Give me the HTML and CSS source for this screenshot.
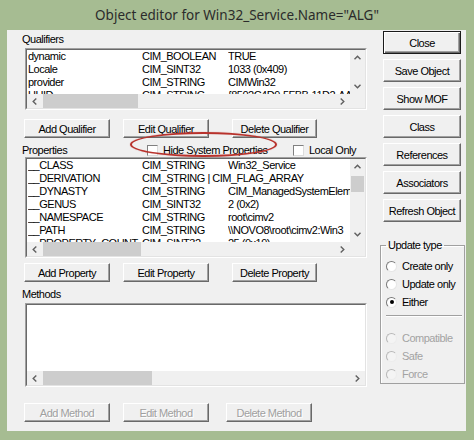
FILE: index.html
```html
<!DOCTYPE html>
<html>
<head>
<meta charset="utf-8">
<link rel="stylesheet" href="styles.css">
</head>
<body>
<div class="window">
  <div class="titlebar">Object editor for Win32_Service.Name="ALG"</div>
  <div class="client">
    <div class="left">
      <div class="label label-q">Qualifiers</div>
      <div class="list list-q">
        <div class="list-in">
          <div class="rows">
            <div class="row"><span class="c1">dynamic</span><span class="c2">CIM_BOOLEAN</span><span class="c3">TRUE</span></div>
            <div class="row"><span class="c1">Locale</span><span class="c2">CIM_SINT32</span><span class="c3">1033 (0x409)</span></div>
            <div class="row"><span class="c1">provider</span><span class="c2">CIM_STRING</span><span class="c3">CIMWin32</span></div>
            <div class="row"><span class="c1">UUID</span><span class="c2">CIM_STRING</span><span class="c3">{8502C4D9-5FBB-11D2-AA</span></div>
          </div>
          <div class="vscroll">
            <div class="arrow"><svg width="7" height="5" viewBox="0 0 7 5"><polyline points="0.5,4.3 3.5,1.2 6.5,4.3" fill="none" stroke="#606060" stroke-width="1.4"/></svg></div>
            <div class="vtrack"></div>
            <div class="arrow"><svg width="7" height="5" viewBox="0 0 7 5"><polyline points="0.5,0.7 3.5,3.8 6.5,0.7" fill="none" stroke="#606060" stroke-width="1.4"/></svg></div>
          </div>
          <div class="hscroll">
            <div class="arrow"><svg width="5" height="7" viewBox="0 0 5 7"><polyline points="4.3,0.5 1.2,3.5 4.3,6.5" fill="none" stroke="#606060" stroke-width="1.4"/></svg></div>
            <div class="htrack"><div class="hthumb thumb-q"></div></div>
            <div class="arrow"><svg width="5" height="7" viewBox="0 0 5 7"><polyline points="0.7,0.5 3.8,3.5 0.7,6.5" fill="none" stroke="#606060" stroke-width="1.4"/></svg></div>
          </div>
          <div class="corner"></div>
        </div>
      </div>
      <div class="btnrow btnrow-q">
        <div class="btn b-add">Add Qualifier</div>
        <div class="btn b-edit">Edit Qualifier</div>
        <div class="btn b-del">Delete Qualifier</div>
      </div>
      <div class="props-head">
        <div class="props-label">Properties</div>
        <div class="chk chk-hide"><span class="box"></span><span>Hide System Properties</span></div>
        <div class="chk"><span class="box"></span><span>Local Only</span></div>
        <div class="mark"></div>
      </div>
      <div class="list list-p">
        <div class="list-in">
          <div class="rows">
            <div class="row"><span class="c1">__CLASS</span><span class="c2">CIM_STRING</span><span class="c3">Win32_Service</span></div>
            <div class="row"><span class="c1">__DERIVATION</span><span class="c2 wide">CIM_STRING | CIM_FLAG_ARRAY</span></div>
            <div class="row"><span class="c1">__DYNASTY</span><span class="c2">CIM_STRING</span><span class="c3">CIM_ManagedSystemElem</span></div>
            <div class="row"><span class="c1">__GENUS</span><span class="c2">CIM_SINT32</span><span class="c3">2 (0x2)</span></div>
            <div class="row"><span class="c1">__NAMESPACE</span><span class="c2">CIM_STRING</span><span class="c3">root\cimv2</span></div>
            <div class="row"><span class="c1">__PATH</span><span class="c2">CIM_STRING</span><span class="c3">\\NOVO8\root\cimv2:Win3</span></div>
            <div class="row"><span class="c1">__PROPERTY_COUNT</span><span class="c2">CIM_SINT32</span><span class="c3">25 (0x19)</span></div>
          </div>
          <div class="vscroll">
            <div class="arrow"><svg width="7" height="5" viewBox="0 0 7 5"><polyline points="0.5,4.3 3.5,1.2 6.5,4.3" fill="none" stroke="#606060" stroke-width="1.4"/></svg></div>
            <div class="vtrack"><div class="vthumb"></div></div>
            <div class="arrow"><svg width="7" height="5" viewBox="0 0 7 5"><polyline points="0.5,0.7 3.5,3.8 6.5,0.7" fill="none" stroke="#606060" stroke-width="1.4"/></svg></div>
          </div>
          <div class="hscroll">
            <div class="arrow"><svg width="5" height="7" viewBox="0 0 5 7"><polyline points="4.3,0.5 1.2,3.5 4.3,6.5" fill="none" stroke="#606060" stroke-width="1.4"/></svg></div>
            <div class="htrack"><div class="hthumb thumb-p"></div></div>
            <div class="arrow"><svg width="5" height="7" viewBox="0 0 5 7"><polyline points="0.7,0.5 3.8,3.5 0.7,6.5" fill="none" stroke="#606060" stroke-width="1.4"/></svg></div>
          </div>
          <div class="corner"></div>
        </div>
      </div>
      <div class="btnrow btnrow-p">
        <div class="btn b-add">Add Property</div>
        <div class="btn b-edit">Edit Property</div>
        <div class="btn b-del">Delete Property</div>
      </div>
      <div class="label label-m">Methods</div>
      <div class="list list-m">
        <div class="list-in list-in-m">
          <div class="rows"></div>
          <div class="hscroll">
            <div class="arrow"><svg width="5" height="7" viewBox="0 0 5 7"><polyline points="4.3,0.5 1.2,3.5 4.3,6.5" fill="none" stroke="#606060" stroke-width="1.4"/></svg></div>
            <div class="htrack"><div class="hthumb thumb-m"></div></div>
            <div class="arrow"><svg width="5" height="7" viewBox="0 0 5 7"><polyline points="0.7,0.5 3.8,3.5 0.7,6.5" fill="none" stroke="#606060" stroke-width="1.4"/></svg></div>
          </div>
        </div>
      </div>
      <div class="btnrow btnrow-m">
        <div class="btn disabled b-add">Add Method</div>
        <div class="btn disabled b-edit">Edit Method</div>
        <div class="btn disabled b-mdel">Delete Method</div>
      </div>
    </div>
    <div class="right">
      <div class="btn rbtn default">Close</div>
      <div class="btn rbtn">Save Object</div>
      <div class="btn rbtn">Show MOF</div>
      <div class="btn rbtn">Class</div>
      <div class="btn rbtn">References</div>
      <div class="btn rbtn">Associators</div>
      <div class="btn rbtn">Refresh Object</div>
      <fieldset class="group">
        <legend>Update type</legend>
        <div class="radio"><span class="dot"></span><span>Create only</span></div>
        <div class="radio"><span class="dot"></span><span>Update only</span></div>
        <div class="radio"><span class="dot on"></span><span>Either</span></div>
        <div class="sep"></div>
        <div class="radio off"><span class="dot"></span><span>Compatible</span></div>
        <div class="radio off"><span class="dot"></span><span>Safe</span></div>
        <div class="radio off"><span class="dot"></span><span>Force</span></div>
      </fieldset>
    </div>
  </div>
</div>
</body>
</html>
```

FILE: styles.css
```css
html, body {
  margin: 0;
  padding: 0;
}
body {
  background: #a6bc92;
  width: 474px;
  height: 440px;
  overflow: hidden;
  font-family: "Liberation Sans", Arial, sans-serif;
}
.window {
  width: 474px;
  height: 440px;
}
.titlebar {
  height: 30px;
  display: flex;
  align-items: center;
  justify-content: center;
  font-family: "Noto Sans", "Open Sans", sans-serif;
  font-size: 13.5px;
  color: #2b2b2b;
}
.client {
  margin-left: 7px;
  width: 459px;
  height: 401px;
  box-sizing: border-box;
  background: #f0f0f0;
  display: flex;
  padding-left: 15px;
  gap: 13px;
  font-size: 11px;
  letter-spacing: -0.5px;
  color: #000;
}
.left {
  width: 345px;
  display: flex;
  flex-direction: column;
}
.label {
  height: 15px;
  line-height: 13px;
}
.label-q { margin-top: 3px; }
.label-m { margin-top: 6px; }

.list {
  margin-left: 3px;
  width: 342px;
  box-sizing: border-box;
  border: 1px solid;
  border-color: #a0a0a0 #ffffff #ffffff #a0a0a0;
}
.list-q { height: 62px; }
.list-p { height: 101px; }
.list-m { height: 84px; }
.list-in {
  height: 100%;
  box-sizing: border-box;
  border: 1px solid;
  border-color: #696969 #e3e3e3 #e3e3e3 #696969;
  background: #fff;
  display: grid;
  grid-template-columns: 1fr 15px;
  grid-template-rows: 1fr 14px;
}
.list-in-m {
  grid-template-columns: 1fr;
}
.rows {
  overflow: hidden;
  padding-left: 1px;
  min-width: 0;
}
.row {
  height: 13px;
  line-height: 13px;
  white-space: nowrap;
  display: flex;
}
.c1 { width: 114px; flex: none; overflow: hidden; }
.c2 { width: 86px; flex: none; overflow: hidden; }
.c2.wide { width: auto; overflow: visible; }
.c3 { flex: 1; min-width: 0; overflow: hidden; }

.vscroll {
  background: #f0f0f0;
  display: flex;
  flex-direction: column;
}
.vscroll .arrow {
  height: 15px;
  display: flex;
  align-items: center;
  justify-content: center;
}
.vtrack {
  flex: 1;
  padding: 2px 1px 0 1px;
}
.vthumb {
  height: 16px;
  background: #cdcdcd;
}
.hscroll {
  background: #f0f0f0;
  display: flex;
}
.hscroll .arrow {
  width: 15px;
  display: flex;
  align-items: center;
  justify-content: center;
}
.htrack {
  flex: 1;
  padding-left: 1px;
}
.hthumb {
  height: 14px;
  background: #cdcdcd;
}
.thumb-q { width: 95px; }
.thumb-p { width: 98px; }
.thumb-m { width: 109px; }
.corner { background: #f0f0f0; }

.btn {
  box-sizing: border-box;
  height: 19px;
  border: 1px solid;
  border-color: #ffffff #696969 #696969 #ffffff;
  box-shadow: inset -1px -1px #a0a0a0;
  background: #f0f0f0;
  display: flex;
  align-items: center;
  justify-content: center;
  white-space: nowrap;
}
.btn.disabled {
  color: #a0a0a0;
  text-shadow: 1px 1px 0 #ffffff;
}
.btnrow {
  display: flex;
  height: 19px;
  padding-left: 2px;
}
.btnrow-q { margin-top: 9px; }
.btnrow-p { margin-top: 5px; }
.btnrow-m { margin-top: 16px; }
.b-add { width: 86px; }
.b-edit { width: 86px; margin-left: 13px; }
.b-del { width: 85px; margin-left: 23px; }
.b-mdel { width: 86px; margin-left: 17px; }

.props-head {
  position: relative;
  margin-top: 6px;
  height: 13px;
  display: flex;
  align-items: center;
  line-height: 13px;
}
.props-label { width: 125px; }
.chk {
  display: flex;
  align-items: center;
  gap: 5px;
}
.chk-hide { width: 146px; }
.box {
  width: 11px;
  height: 11px;
  box-sizing: border-box;
  background: #fff;
  border: 1px solid;
  border-color: #808080 #dcdcdc #dcdcdc #808080;
}
.mark {
  position: absolute;
  left: 108px;
  top: -12px;
  width: 147px;
  height: 25px;
  box-sizing: border-box;
  border: 2px solid #b8322c;
  border-radius: 50%;
  box-shadow: 0 0 1px rgba(184, 50, 44, 0.6);
}

.right {
  width: 85px;
  display: flex;
  flex-direction: column;
}
.rbtn {
  margin-left: 3px;
  width: 78px;
  height: 23px;
  margin-top: 5px;
}
.rbtn.default {
  margin-top: 1px;
  border: 1px solid #1a1a1a;
  box-shadow: inset 1px 1px #ffffff, inset -1px -1px #696969, inset -2px -2px #a0a0a0;
}
.group {
  margin: 17px 0 0 0;
  padding: 6px 0 0 5px;
  border: 1px solid #a0a0a0;
  box-shadow: inset 1px 1px #ffffff;
  min-width: 0;
}
.group legend {
  padding: 0 2px;
  margin: 0;
  line-height: 12px;
  font-size: 11px;
}
.radio {
  height: 18px;
  display: flex;
  align-items: center;
  gap: 5px;
  white-space: nowrap;
}
.dot {
  width: 11px;
  height: 11px;
  box-sizing: border-box;
  border-radius: 50%;
  background: #fff;
  border: 1px solid;
  border-color: #7a7a7a #e6e6e6 #e6e6e6 #7a7a7a;
  display: flex;
  align-items: center;
  justify-content: center;
}
.dot.on::after {
  content: "";
  width: 4px;
  height: 4px;
  border-radius: 50%;
  background: #000;
}
.radio.off {
  color: #a3a3a3;
}
.radio.off .dot {
  background: #f4f4f4;
  border-color: #b8b8b8 #ececec #ececec #b8b8b8;
}
.sep {
  height: 0;
  border-top: 1px solid #a0a0a0;
  border-bottom: 1px solid #ffffff;
  margin: 4px 2px 12px 0;
}
```
